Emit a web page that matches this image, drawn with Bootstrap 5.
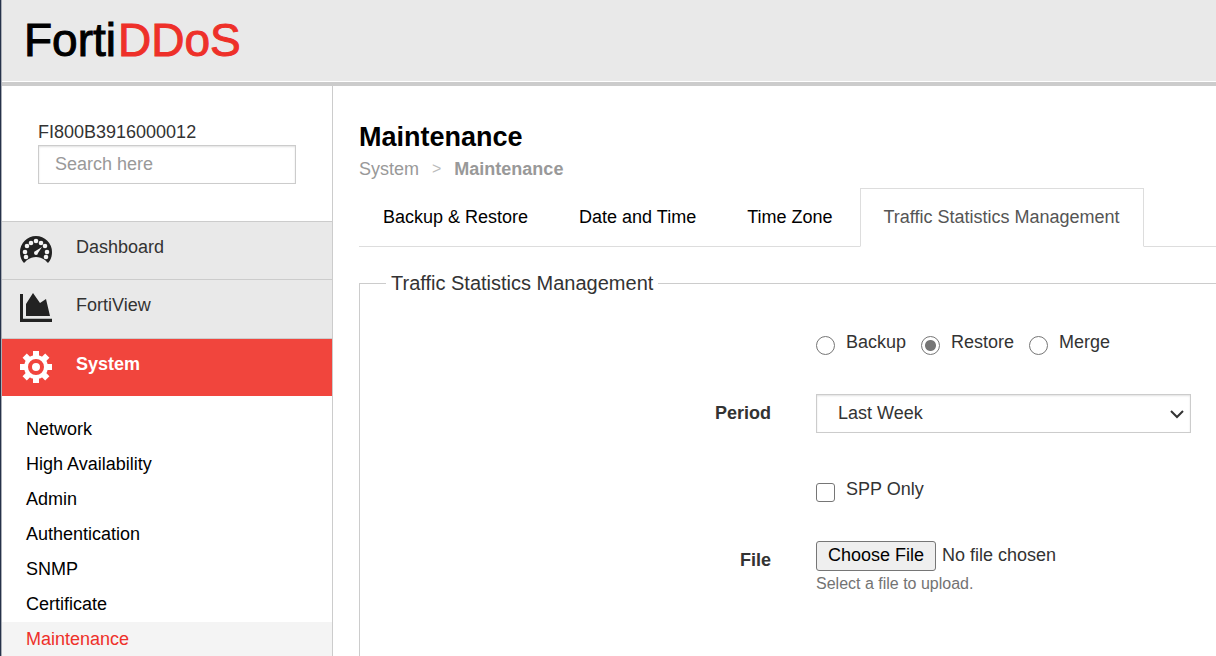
<!DOCTYPE html>
<html lang="en">
<head>
<meta charset="utf-8">
<meta name="viewport" content="width=device-width, initial-scale=1">
<title>FortiDDoS - Maintenance</title>
<link href="https://cdn.jsdelivr.net/npm/bootstrap@5.3.0/dist/css/bootstrap.min.css" rel="stylesheet">
<style>
  body { font-family: "Liberation Sans", Arial, sans-serif; font-size: 18px; line-height: 26px; color: #333; background: #fff; }
  .shell { border-left: 1px solid #26324a; box-shadow: inset 1px 0 #a9adb5; padding-left: 1px; }
  .topbar { background: #e9e9e9; border-bottom: 4px solid #ccc; box-shadow: inset 0 -1px #fff; padding: 14px 22px 16px; }
  .logo { font-size: 46px; line-height: 52px; color: #000; -webkit-text-stroke: 1px currentColor; }
  .logo span { color: #ee3029; margin-left: 2px; }
  .sidebar { width: 331px; border-right: 1px solid #ccc; }
  .finder { padding: 33px 36px 37px; }
  .form-control, .form-select { font-size: 18px; line-height: 25px; height: 39px; border: 1px solid #ccc; border-radius: 0; color: #333; box-shadow: inset 0 1px 2px rgba(0,0,0,.12); }
  .form-control { padding: 6px 16px; }
  .form-control::placeholder { color: #999; }
  .form-select { padding: 6px 36px 6px 21px; background-position: right 6px center; background-size: 14px 10px;
    background-image: url("data:image/svg+xml,%3Csvg xmlns='http://www.w3.org/2000/svg' viewBox='0 0 14 10'%3E%3Cpath d='M1 2l6 6 6-6' fill='none' stroke='%23333' stroke-width='2'/%3E%3C/svg%3E"); }
  .mainmenu a { height: 58px; border-top: 1px solid #ccc; background: #e9e9e9; color: #333; padding: 12px 18px; gap: 24px; }
  .mainmenu a + a { height: 59px; }
  .mainmenu a.active { background: #f1453d; color: #fff; font-weight: 700; height: 58px; }
  .mainmenu svg { width: 32px; height: 32px; flex: none; }
  .submenu { padding-top: 16px; }
  .submenu a { color: #000; padding: 4px 24px 5px; }
  .submenu a.active { color: #ee3029; background: #f4f4f4; }
  .page { padding: 36px 0 0 26px; }
  h1 { font-size: 27px; line-height: 30px; font-weight: 700; color: #000; }
  .breadcrumb { --bs-breadcrumb-divider: ">"; --bs-breadcrumb-divider-color: #bbb; --bs-breadcrumb-item-padding-x: 13px; font-size: 18px; color: #999; margin-bottom: 6px; }
  .breadcrumb a { color: #999; }
  .breadcrumb-item + .breadcrumb-item::before { font-size: 16px; font-weight: 400; }
  .nav-tabs { border-color: #ddd; gap: 3px; }
  .nav-tabs .nav-link { color: #000; padding: 15px 23px 16px; border-radius: 0; }
  .nav-tabs .nav-link.active { color: #555; border-color: #ddd #ddd #fff; }
  fieldset { border: solid #ccc; border-width: 1px 0 0 1px; margin-top: 22px; }
  legend { float: none; width: auto; font-size: 20px; line-height: 28px; margin: 0 0 0 26px; padding: 0 5px; }
  .line { padding-top: 39px; }
  .rowlabel { padding: 6px 17px 0 0; }
  .rowfield { padding-left: 28px; padding-right: 25px; }
  .choice { margin-right: 15px; }
  .pick { appearance: none; width: 19px; height: 19px; border: 1px solid #767676; background: #fff; margin: 7px 11px 0 0; flex: none; }
  .pick[type=radio] { border-radius: 50%; }
  .pick[type=checkbox] { border-radius: 3px; }
  .pick[type=radio]:checked { background: radial-gradient(circle, #767676 5px, #fff 6px); }
  .filebox { font-size: 18px; line-height: 21px; height: 30px; width: 100%; }
  .filebox::file-selector-button { font: inherit; color: #000; background: #efefef; border: 1px solid #767676; border-radius: 3px; padding: 3px 11px 4px; height: 30px; margin-right: 6px; }
  .hint { font-size: 16px; color: #737373; }
</style>
</head>
<body>
<div class="shell min-vh-100 d-flex flex-column">
  <header class="topbar"><div class="logo">Forti<span>DDoS</span></div></header>
  <div class="d-flex flex-grow-1">
    <aside class="sidebar flex-shrink-0">
      <div class="finder">
        <label for="search" class="d-block">FI800B3916000012</label>
        <input id="search" type="text" class="form-control" placeholder="Search here">
      </div>
      <nav class="mainmenu">
        <a href="#" class="d-flex text-decoration-none">
          <svg viewBox="0 -1 32 32" aria-hidden="true">
            <path d="M4 28C1 25 0 21 0 17a16 16 0 0 1 32 0c0 4-1 8-4 11l-3-3c-6-4-12-4-18 0z" fill="#222"/>
            <g fill="#f4f4f4"><circle cx="6" cy="22" r="2.300"/><circle cx="5" cy="17" r="2.300"/><circle cx="7" cy="11" r="2.300"/><circle cx="11" cy="8" r="2.300"/><circle cx="16" cy="6" r="2.300"/><circle cx="21" cy="8" r="2.300"/><circle cx="25" cy="11" r="2.300"/><circle cx="27" cy="17" r="2.300"/><circle cx="26" cy="22" r="2.300"/><path d="M22 12L15.500 16a2 2 0 1 0 2.500 2z"/></g>
          </svg>
          <span>Dashboard</span></a>
        <a href="#" class="d-flex text-decoration-none">
          <svg viewBox="0 0 32 32" aria-hidden="true">
            <path d="M3 2v24h29v2H2z" fill="#b5b8b7"/><path d="M0 2h3v25h29v3H0z" fill="#222"/>
            <path d="M6 24V12l7-11 7 10 6-4 4 17z" fill="#222"/>
          </svg>
          <span>FortiView</span></a>
        <a href="#" class="d-flex text-decoration-none active">
          <svg viewBox="0 0 32 32" aria-hidden="true">
            <g fill="#fff"><path id="tooth" d="M13 0h6v7h-6zM13 25h6v7h-6z"/><use href="#tooth" transform="rotate(45 16 16)"/><use href="#tooth" transform="rotate(90 16 16)"/><use href="#tooth" transform="rotate(135 16 16)"/><circle cx="16" cy="16" r="12"/></g>
            <circle cx="16" cy="16" r="6" fill="#fff" stroke="#f1453d" stroke-width="4"/>
          </svg>
          <span>System</span></a>
      </nav>
      <nav class="submenu d-flex flex-column">
        <a href="#" class="text-decoration-none">Network</a>
        <a href="#" class="text-decoration-none">High Availability</a>
        <a href="#" class="text-decoration-none">Admin</a>
        <a href="#" class="text-decoration-none">Authentication</a>
        <a href="#" class="text-decoration-none">SNMP</a>
        <a href="#" class="text-decoration-none">Certificate</a>
        <a href="#" class="text-decoration-none active">Maintenance</a>
      </nav>
    </aside>
    <main class="page flex-grow-1 d-flex flex-column">
      <h1 class="mb-1">Maintenance</h1>
      <ol class="breadcrumb">
        <li class="breadcrumb-item"><a href="#" class="text-decoration-none">System</a></li>
        <li class="breadcrumb-item fw-bold">Maintenance</li>
      </ol>
      <ul class="nav nav-tabs">
        <li class="nav-item"><a class="nav-link" href="#">Backup &amp; Restore</a></li>
        <li class="nav-item"><a class="nav-link" href="#">Date and Time</a></li>
        <li class="nav-item"><a class="nav-link" href="#">Time Zone</a></li>
        <li class="nav-item"><a class="nav-link active" href="#">Traffic Statistics Management</a></li>
      </ul>
      <fieldset class="flex-grow-1">
        <legend>Traffic Statistics Management</legend>
        <div class="row g-0 pt-4 mt-2">
          <div class="col-6 offset-6 rowfield d-flex">
            <input class="pick" type="radio" name="mode" id="backup"><label for="backup" class="choice">Backup</label>
            <input class="pick" type="radio" name="mode" id="restore" checked><label for="restore" class="choice">Restore</label>
            <input class="pick" type="radio" name="mode" id="merge"><label for="merge">Merge</label>
          </div>
        </div>
        <div class="row g-0 line">
          <label for="period" class="col-6 rowlabel text-end fw-bold">Period</label>
          <div class="col-6 rowfield"><select id="period" class="form-select"><option>Last Week</option></select></div>
        </div>
        <div class="row g-0 line">
          <div class="col-6 offset-6 rowfield d-flex pt-1">
            <input class="pick" type="checkbox" id="spp"><label for="spp">SPP Only</label>
          </div>
        </div>
        <div class="row g-0 line">
          <label for="file" class="col-6 rowlabel text-end fw-bold">File</label>
          <div class="col-6 rowfield">
            <input id="file" type="file" class="filebox d-block">
            <div class="hint">Select a file to upload.</div>
          </div>
        </div>
      </fieldset>
    </main>
  </div>
</div>
<script src="https://cdn.jsdelivr.net/npm/bootstrap@5.3.0/dist/js/bootstrap.bundle.min.js"></script>
</body>
</html>
